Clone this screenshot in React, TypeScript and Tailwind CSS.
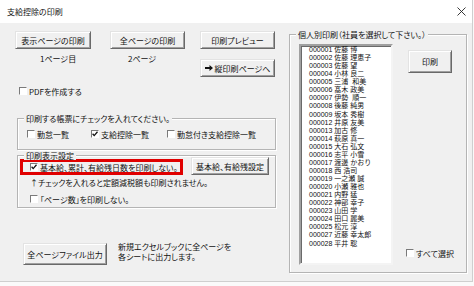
import React from "react";

const people: [string, string][] = [
  ["000001", "佐藤 博"],
  ["000002", "佐藤 理恵子"],
  ["000003", "佐藤 望"],
  ["000004", "小林 良二"],
  ["000005", "三浦  和美"],
  ["000006", "髙木 政美"],
  ["000007", "伊勢  順一"],
  ["000008", "後藤 純男"],
  ["000009", "坂本 秀樹"],
  ["000012", "井原 友美"],
  ["000013", "加古 修"],
  ["000014", "萩原 真一"],
  ["000015", "大石 弘文"],
  ["000016", "志平 小雪"],
  ["000017", "渡邊 かおり"],
  ["000018", "西 浩司"],
  ["000019", "一之瀬 誠"],
  ["000020", "小瀬 雅也"],
  ["000021", "内野 猛"],
  ["000022", "神部 幸子"],
  ["000023", "山田 学"],
  ["000024", "田口 麗美"],
  ["000025", "松元 淳"],
  ["000027", "近藤 幸太郎"],
  ["000028", "平井 聡"],
];

function Btn({ className, children }: { className: string; children: React.ReactNode }) {
  return (
    <div
      className={
        "flex items-center justify-center bg-[#f0f0f0] border border-t-[#e3e3e3] border-l-[#e3e3e3] border-r-[#696969] border-b-[#696969] shadow-[inset_1px_1px_0_#fff,inset_-1px_-1px_0_#a0a0a0] leading-[9px] whitespace-nowrap " +
        className
      }
    >
      {children}
    </div>
  );
}

function Check({ checked }: { checked?: boolean }) {
  return (
    <span className="relative w-[8px] h-[8px] shrink-0 bg-white border border-t-[#7a7a7a] border-l-[#7a7a7a] border-r-[#ffffff] border-b-[#ffffff]">
      {checked && (
        <svg className="absolute left-0 top-0" width="6" height="6" viewBox="0 0 6 6">
          <polyline points="0.6,2.8 2.2,4.6 5.5,0.8" fill="none" stroke="#111" strokeWidth="1.3" />
        </svg>
      )}
    </span>
  );
}

function CheckRow({ checked, label, className = "" }: { checked?: boolean; label: string; className?: string }) {
  return (
    <div className={"flex items-center gap-[2px] h-[10px] leading-[9px] whitespace-nowrap " + className}>
      <Check checked={checked} />
      <span>{label}</span>
    </div>
  );
}

function Group({ title, className, children }: { title: string; className: string; children: React.ReactNode }) {
  return (
    <div className={"relative border border-[#b4b4b4] shadow-[inset_1px_1px_0_#fff,1px_1px_0_#fff] " + className}>
      <span className="absolute -top-[5px] left-[6px] px-[2px] bg-[#f0f0f0] leading-[9px] whitespace-nowrap">{title}</span>
      {children}
    </div>
  );
}

export default function App() {
  return (
    <div className="w-[474px] h-[286px] bg-[#fafafa] overflow-hidden text-[8px] text-[#111] font-['Noto_Sans_CJK_JP','Noto_Sans',sans-serif] [font-feature-settings:'palt']">
      <div className="w-[473px] h-[282px] bg-[#f0f0f0] border-r border-b border-[#cfcfcf] flex flex-col">
        {/* title bar */}
        <div className="h-[23px] bg-white flex items-center justify-between pl-[7px] pr-[6px] shrink-0">
          <span className="leading-[9px]">支給控除の印刷</span>
          <svg width="9" height="9" viewBox="0 0 9 9">
            <line x1="0.5" y1="0.5" x2="8.5" y2="8.5" stroke="#222" strokeWidth="0.9" />
            <line x1="8.5" y1="0.5" x2="0.5" y2="8.5" stroke="#222" strokeWidth="0.9" />
          </svg>
        </div>

        <div className="flex flex-1">
          {/* left column */}
          <div className="w-[277px] pl-[15px] pt-[8px] flex flex-col shrink-0">
            <div className="flex items-start">
              <div className="w-[76px] flex flex-col">
                <Btn className="w-[76px] h-[18px]">表示ページの印刷</Btn>
                <span className="mt-[5px] pl-[25px] leading-[9px]">1ページ目</span>
              </div>
              <div className="ml-[19px] w-[75px] flex flex-col">
                <Btn className="w-[75px] h-[18px]">全ページの印刷</Btn>
                <span className="mt-[5px] pl-[18px] leading-[9px]">2ページ</span>
              </div>
              <div className="ml-[15px] w-[75px] flex flex-col">
                <Btn className="w-[75px] h-[18px]">印刷プレビュー</Btn>
                <Btn className="w-[75px] h-[18px] mt-[10px] gap-[2px]">
                  <svg width="8" height="6" viewBox="0 0 8 6">
                    <polygon points="0,2 4.5,2 4.5,0 8,3 4.5,6 4.5,4 0,4" fill="#111" />
                  </svg>
                  <span>縦印刷ページへ</span>
                </Btn>
              </div>
            </div>

            <CheckRow label="PDFを作成する" className="mt-[9px] pl-[4px]" />

            <Group title="印刷する帳票にチェックを入れてください。" className="mt-[22px] ml-[2px] w-[259px] h-[32px] shrink-0">
              <div className="flex pl-[9px] pt-[10px]">
                <CheckRow label="勤怠一覧" className="w-[64px]" />
                <CheckRow checked label="支給控除一覧" className="w-[76px]" />
                <CheckRow label="勤怠付き支給控除一覧" />
              </div>
            </Group>

            <Group title="印刷表示設定" className="mt-[5px] ml-[2px] w-[259px] h-[53px] shrink-0">
              <div className="flex items-end pl-[2px] pt-[1px]">
                <div className="w-[163px] h-[16px] border-[3px] border-[#e00000] flex items-center pl-[7px]">
                  <CheckRow checked label="基本給、累計、有給残日数を印刷しない。" />
                </div>
                <Btn className="ml-[8px] w-[78px] h-[18px]">基本給、有給残設定</Btn>
              </div>
              <div className="mt-[3px] pl-[12px] leading-[9px] whitespace-nowrap">↑チェックを入れると定額減税額も印刷されません。</div>
              <CheckRow label="「ページ数」を印刷しない。" className="mt-[7px] pl-[12px]" />
            </Group>

            <div className="flex items-start mt-[35px] ml-[8px]">
              <Btn className="w-[84px] h-[22px]">全ページファイル出力</Btn>
              <div className="ml-[11px] leading-[9.5px] whitespace-nowrap font-['Liberation_Sans','Noto_Sans_CJK_JP',sans-serif]">
                <div>新規エクセルブックに全ページを</div>
                <div>各シートに出力します。</div>
              </div>
            </div>
          </div>

          {/* right group */}
          <Group title="個人別印刷（社員を選択して下さい。）" className="ml-[12px] mt-[11px] w-[178px] h-[239px] shrink-0">
            <div className="flex h-full pl-[9px] pt-[9px] pb-[7px]">
              <div className="w-[94px] h-[221px] bg-white border-2 border-t-[#a0a0a0] border-l-[#a0a0a0] border-r-[#f4f4f4] border-b-[#f4f4f4] shadow-[inset_1px_1px_0_#6a6a6a] pl-[8px] overflow-hidden shrink-0 [font-feature-settings:normal] font-['Liberation_Sans','Noto_Sans_CJK_JP',sans-serif]">
                {people.map(([id, name]) => (
                  <div key={id} className="text-[7px] leading-[8.07px] h-[8.07px] whitespace-pre">
                    {id} {name}
                  </div>
                ))}
              </div>
              <div className="flex flex-col flex-1">
                <Btn className="ml-[15px] mt-[6px] w-[44px] h-[23px]">印刷</Btn>
                <CheckRow label="すべて選択" className="mt-auto mb-[7px] ml-[13px]" />
              </div>
            </div>
          </Group>
        </div>
      </div>
    </div>
  );
}
